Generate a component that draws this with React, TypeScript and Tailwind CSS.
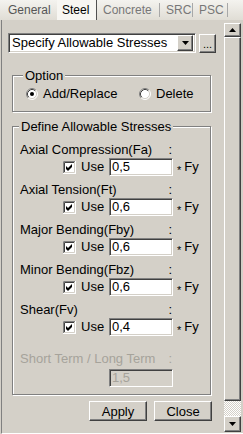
const raised =
  "border border-t-white border-l-white border-r-[#404040] border-b-[#404040] shadow-[inset_-1px_-1px_0_#808080] bg-[#d4d0c8]";
const sunken =
  "border border-t-[#808080] border-l-[#808080] border-r-white border-b-white shadow-[inset_1px_1px_0_#404040,inset_-1px_-1px_0_#d4d0c8]";
const etched =
  "border border-[#808080] shadow-[inset_1px_1px_0_#fff,1px_1px_0_#fff] rounded-none";

function Arrow({ up }: { up?: boolean }) {
  return (
    <svg width="7" height="4" viewBox="0 0 7 4">
      <polygon points={up ? "3.5,0 7,4 0,4" : "0,0 7,0 3.5,4"} fill="#000" />
    </svg>
  );
}

function Radio({ checked }: { checked?: boolean }) {
  return (
    <svg width="12" height="12" viewBox="0 0 12 12" className="shrink-0">
      <circle cx="6" cy="6" r="5" fill="#fff" />
      <path d="M2.11 9.89A5.5 5.5 0 0 1 9.89 2.11" fill="none" stroke="#808080" />
      <path d="M9.89 2.11A5.5 5.5 0 0 1 2.11 9.89" fill="none" stroke="#fff" />
      <path d="M2.82 9.18A4.5 4.5 0 0 1 9.18 2.82" fill="none" stroke="#404040" />
      <path d="M9.18 2.82A4.5 4.5 0 0 1 2.82 9.18" fill="none" stroke="#d4d0c8" />
      {checked ? <circle cx="6" cy="6" r="2" fill="#000" /> : null}
    </svg>
  );
}

function Check() {
  return (
    <svg width="13" height="13" viewBox="0 0 13 13" className="shrink-0">
      <rect width="13" height="13" fill="#fff" />
      <path d="M0.5 12V0.5H12" fill="none" stroke="#808080" />
      <path d="M1.5 11V1.5H11" fill="none" stroke="#404040" />
      <path d="M0 12.5H12.5V0" fill="none" stroke="#fff" />
      <path d="M1 11.5H11.5V1" fill="none" stroke="#d4d0c8" />
      <polygon points="3,5 5,7 9,3 9,6 5,10 3,8" fill="#000" />
    </svg>
  );
}

interface Stress {
  label: string;
  value: string;
}

const stresses: Stress[] = [
  { label: "Axial Compression(Fa)", value: "0,5" },
  { label: "Axial Tension(Ft)", value: "0,6" },
  { label: "Major Bending(Fby)", value: "0,6" },
  { label: "Minor Bending(Fbz)", value: "0,6" },
  { label: "Shear(Fv)", value: "0,4" },
];

function StressRow({ item }: { item: Stress }) {
  return (
    <div className="flex flex-col">
      <div className="flex h-[15px] w-[152px] items-center justify-between leading-[15px]">
        <span>{item.label}</span>
        <span>:</span>
      </div>
      <div className="flex h-[20px] items-center pl-[43px]">
        <Check />
        <span className="ml-[5px] w-[28px]">Use</span>
        <div className={`${sunken} flex h-[18px] w-[64px] items-center bg-white pl-[2px]`}>
          {item.value}
        </div>
        <span className="ml-[4px] flex items-center gap-[3px]">
          <span className="translate-y-[3px] text-[11px]">*</span>
          <span>Fy</span>
        </span>
      </div>
    </div>
  );
}

export default function App() {
  return (
    <div className="flex h-[434px] w-[243px] flex-col overflow-hidden bg-[#d4d0c8] font-['Liberation_Sans',Arial,sans-serif] text-[13px] text-black">
      {/* tab strip */}
      <div className="flex h-[20px] shrink-0 items-stretch bg-gradient-to-b from-[#f4f3ef] to-[#e0ddd5] text-[12px] leading-[20px]">
        <span className="w-[57px] pl-[8px] text-[#555]">General</span>
        <span className="w-[40px] border-r border-[#505050] bg-[#f7f6f2] pl-[5px]">Steel</span>
        <span className="w-[62px] pl-[6px] text-[#777]">Concrete</span>
        <span className="my-[3px] w-px bg-[#a8a8a8]" />
        <span className="w-[32px] pl-[6px] text-[#777]">SRC</span>
        <span className="my-[3px] w-px bg-[#a8a8a8]" />
        <span className="w-[34px] pl-[6px] text-[#777]">PSC</span>
        <span className="my-[3px] w-px bg-[#a8a8a8]" />
      </div>

      {/* panel */}
      <div className="ml-[1px] flex min-h-0 flex-1 border-b border-l border-b-white border-l-[#808080] pb-[1px]">
        <div className="flex w-[222px] flex-col pt-[13px]">
          <div className="flex items-center pl-[6px]">
            <div className={`${sunken} flex h-[20px] w-[188px] items-center justify-between bg-white pl-[3px] pr-[2px]`}>
              <span>Specify Allowable Stresses</span>
              <div className={`${raised} flex h-[16px] w-[16px] items-center justify-center`}>
                <Arrow />
              </div>
            </div>
            <div className={`${raised} ml-[3px] flex h-[19px] w-[17px] items-end justify-center pb-[2px] text-[11px] leading-none`}>
              ...
            </div>
          </div>

          <fieldset className={`${etched} ml-[10px] mt-[15px] w-[199px] pb-[9px]`}>
            <legend className="ml-[10px] bg-[#d4d0c8] px-[2px] leading-[15px]">Option</legend>
            <div className="mt-[3px] flex h-[16px] items-center pl-[13px]">
              <div className="flex w-[113px] items-center gap-[5px]">
                <Radio checked />
                <span>Add/Replace</span>
              </div>
              <div className="flex items-center gap-[5px]">
                <Radio />
                <span>Delete</span>
              </div>
            </div>
          </fieldset>

          <fieldset className={`${etched} ml-[10px] mt-[7px] w-[199px] pb-[7px] pl-[7px]`}>
            <legend className="ml-[-1px] bg-[#d4d0c8] px-[2px] leading-[15px]">
              Define Allowable Stresses
            </legend>
            <div className="mt-[8px] flex flex-col gap-[5px]">
              {stresses.map((s) => (
                <StressRow key={s.label} item={s} />
              ))}
            </div>
            <div className="mt-[14px] flex h-[15px] w-[152px] items-center justify-between leading-[15px] text-[#a6a39b]">
              <span>Short Term / Long Term</span>
              <span>:</span>
            </div>
            <div className="mt-[3px] pl-[89px]">
              <div className={`${sunken} flex h-[18px] w-[64px] items-center bg-[#d4d0c8] pl-[2px] text-[#a6a39b]`}>
                1,5
              </div>
            </div>
          </fieldset>

          <div className="mt-[6px] flex justify-end gap-[7px] pr-[12px]">
            <button className={`${raised} h-[20px] w-[58px] leading-none`}>Apply</button>
            <button className={`${raised} h-[20px] w-[58px] leading-none`}>Close</button>
          </div>
        </div>

        {/* scrollbar */}
        <div className="flex w-[17px] flex-col pt-[3px]">
          <div className={`${raised} flex h-[14px] shrink-0 items-center justify-center`}>
            <Arrow up />
          </div>
          <div className={`${raised} flex-1`} />
          <svg className="h-[15px] w-[17px] shrink-0">
            <defs>
              <pattern id="dither" width="2" height="2" patternUnits="userSpaceOnUse">
                <rect width="2" height="2" fill="#d4d0c8" />
                <rect width="1" height="1" fill="#fff" />
                <rect x="1" y="1" width="1" height="1" fill="#fff" />
              </pattern>
            </defs>
            <rect width="100%" height="100%" fill="url(#dither)" />
          </svg>
          <div className={`${raised} flex h-[16px] shrink-0 items-center justify-center`}>
            <Arrow />
          </div>
        </div>
      </div>
    </div>
  );
}
